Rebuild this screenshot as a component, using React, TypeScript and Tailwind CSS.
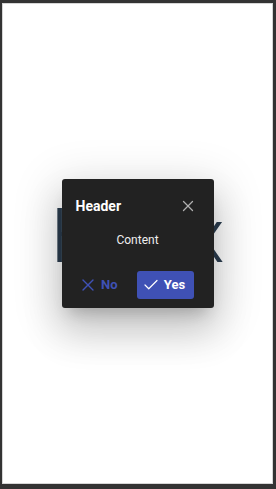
import { X, Check } from 'lucide-react';

export default function App() {
  return (
    <div className="h-[489px] w-[276px] bg-[#333] pt-[3px] pl-[2px] pr-[3px] pb-[5px] font-['Roboto',sans-serif]">
      <div className="relative h-full w-full bg-white border border-[#d6d6d6] overflow-hidden">
        <div className="pt-[194px] text-center text-[76px] leading-none font-light text-[#2c3e50]">
          Hoax
        </div>

        <div className="absolute inset-0 flex items-center justify-center">
          <div className="w-[152px] h-[129px] rounded-[3px] bg-[#222] text-white shadow-[0_11px_15px_-7px_rgba(0,0,0,0.2),0_24px_38px_3px_rgba(0,0,0,0.14),0_9px_46px_8px_rgba(0,0,0,0.12)] flex flex-col">
            <div className="flex items-center justify-between pt-[17px] pl-[14px] pr-[16px]">
              <span className="text-[14px] leading-[20px] font-bold">Header</span>
              <button className="w-5 h-5 flex items-center justify-center text-[#b0b0b0]">
                <X size={18} strokeWidth={1.7} className="shrink-0" />
              </button>
            </div>
            <div className="mt-[16px] text-center text-[12px] leading-[16px] text-[#eee]">Content</div>
            <div className="mt-auto flex items-center justify-end pr-[20px] pb-[9px]">
              <button className="h-[28px] flex items-center gap-[8px] pl-[8px] pr-[9px] mr-[10px] text-[#3f51b5] text-[13px] font-bold">
                <span className="w-[10px] h-[10px] flex items-center justify-center">
                  <X size={20} strokeWidth={1.6} className="shrink-0" />
                </span>
                No
              </button>
              <button className="h-[28px] w-[57px] flex items-center justify-center gap-[7px] rounded-[3px] bg-[#3f51b5] text-white text-[13px] font-bold">
                <span className="w-[12px] h-[12px] flex items-center justify-center">
                  <Check size={18} strokeWidth={1.6} className="shrink-0" />
                </span>
                Yes
              </button>
            </div>
          </div>
        </div>
      </div>
    </div>
  );
}
